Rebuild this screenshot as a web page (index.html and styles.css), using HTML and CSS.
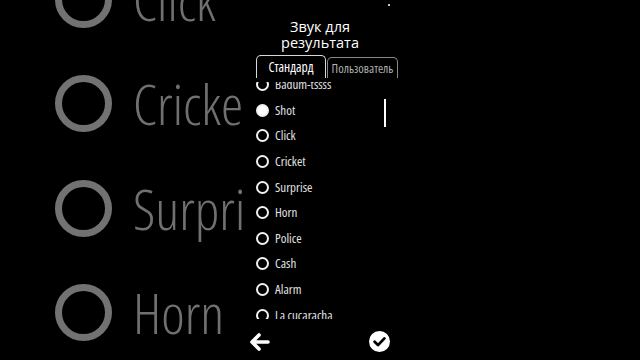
FILE: index.html
```html
<!DOCTYPE html>
<html lang="ru">
<head>
  <meta charset="UTF-8" />
  <title>Звук для результата</title>
  <meta name="viewport" content="width=device-width, initial-scale=1" />
  <link rel="stylesheet" href="styles.css">
</head>
<body>
  <div class="backdrop">
    <div class="big-list">
      <div class="big-row"><span class="big-radio"></span><span class="big-label">Click</span></div>
      <div class="big-row"><span class="big-radio"></span><span class="big-label">Cricket</span></div>
      <div class="big-row"><span class="big-radio"></span><span class="big-label">Surprise</span></div>
      <div class="big-row"><span class="big-radio"></span><span class="big-label">Horn</span></div>
    </div>
  </div>

  <div class="screen">
    <span class="led"></span>
    <h1 class="title">Звук для<br>результата</h1>

    <div class="tabs">
      <div class="tab active">Стандард</div>
      <div class="tab">Пользователь</div>
    </div>

    <div class="sounds">
      <div class="sound-list">
        <label class="sound"><span class="radio"></span>Badum-tssss</label>
        <label class="sound"><span class="radio on"></span>Shot</label>
        <label class="sound"><span class="radio"></span>Click</label>
        <label class="sound"><span class="radio"></span>Cricket</label>
        <label class="sound"><span class="radio"></span>Surprise</label>
        <label class="sound"><span class="radio"></span>Horn</label>
        <label class="sound"><span class="radio"></span>Police</label>
        <label class="sound"><span class="radio"></span>Cash</label>
        <label class="sound"><span class="radio"></span>Alarm</label>
        <label class="sound"><span class="radio"></span>La cucaracha</label>
      </div>
      <span class="scrollbar"></span>
    </div>

    <div class="actions">
      <svg class="back" width="20" height="18" viewBox="0 0 20 18">
        <path d="M9 2 L2 9 L9 16 M2.5 9 H18" fill="none" stroke="#fff" stroke-width="3.6" stroke-linecap="round" stroke-linejoin="round"/>
      </svg>
      <svg class="ok" width="21" height="21" viewBox="0 0 21 21">
        <circle cx="10.5" cy="10.5" r="10.5" fill="#fff"/>
        <path d="M5.6 10.8 L9 14.1 L15.4 7.4" fill="none" stroke="#000" stroke-width="2.8" stroke-linecap="round" stroke-linejoin="round"/>
      </svg>
    </div>
  </div>
</body>
</html>
```

FILE: styles.css
```css
body { margin: 0; background: #000; width: 640px; height: 360px; overflow: hidden; display: flex;
  font-family: "Open Sans", "DejaVu Sans", sans-serif; font-stretch: 75%; }

.backdrop { width: 243px; height: 360px; overflow: hidden; flex: none; margin-right: 5px; }
.big-list { margin-top: -53px; }
.big-row { height: 104.5px; display: flex; align-items: center; white-space: nowrap; }
.big-radio { width: 43px; height: 43px; border: 7px solid #727272; border-radius: 50%; margin-left: 55px; flex: none; }
.big-label { margin-left: 21px; font-size: 56px; font-weight: 300; color: #707070; line-height: 1.2;
  flex: 1; min-width: 0; overflow: hidden; }

.screen { width: 144px; height: 360px; flex: none; position: relative; display: flex; flex-direction: column; }
.led { position: absolute; top: 4px; left: 140px; width: 2px; height: 2px; background: #9fd9c0; }

.title { margin: 19px 0 0; font-size: 14.5px; font-weight: 400; line-height: 16px; text-align: center; color: #fff; font-stretch: 100%; }

.tabs { display: flex; align-items: flex-end; margin: 4px 0 0 8px; height: 23px; }
.tab { flex: none; border: 1px solid #8a8a8a; border-bottom: none; border-radius: 5px 5px 0 0; height: 21px;
  display: flex; align-items: center; justify-content: center; font-size: 12.5px; color: #b0b0b0; box-sizing: border-box; white-space: nowrap; }
.tab.active { border-color: #d8d8d8; color: #fff; height: 23px; width: 70px; font-size: 13.5px; }
.tab + .tab { margin-left: 1px; width: 71px; }

.sounds { height: 237px; overflow: hidden; position: relative; margin-top: 4px; }
.sound-list { margin-top: -10px; }
.sound { height: 25.6px; display: flex; align-items: center; font-size: 13px; line-height: 1; color: #e2e2e2; white-space: nowrap; }
.radio { width: 13px; height: 13px; border: 2px solid #f2f2f2; border-radius: 50%; box-sizing: border-box; margin: 0 6px 0 8px; flex: none; }
.radio.on { background: #fff; }
.scrollbar { position: absolute; left: 136px; top: 17px; width: 2px; height: 28px; background: #fff; }

.actions { display: flex; justify-content: space-between; align-items: center; padding: 0 2px 0 2px; margin-top: 12px; }
```
